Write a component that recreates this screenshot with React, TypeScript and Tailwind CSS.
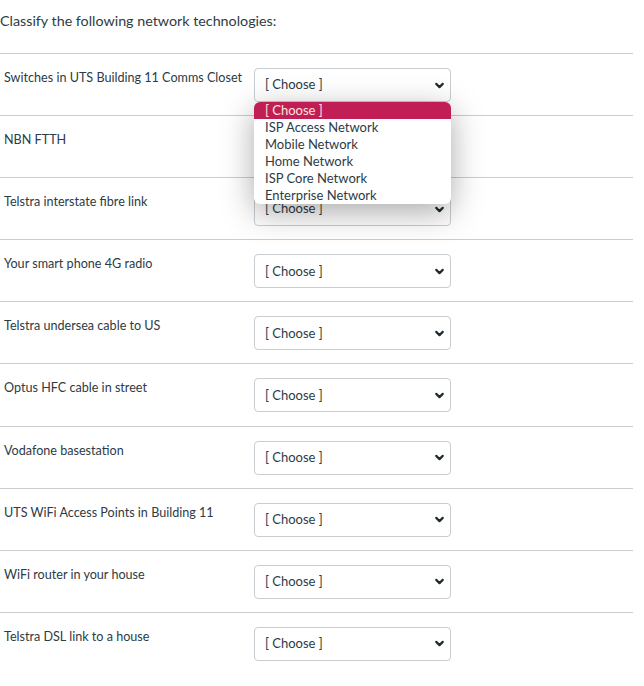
import { ChevronDown } from 'lucide-react';

const ITEMS = [
  'Switches in UTS Building 11 Comms Closet',
  'NBN FTTH',
  'Telstra interstate fibre link',
  'Your smart phone 4G radio',
  'Telstra undersea cable to US',
  'Optus HFC cable in street',
  'Vodafone basestation',
  'UTS WiFi Access Points in Building 11',
  'WiFi router in your house',
  'Telstra DSL link to a house',
];

const OPTIONS = [
  '[ Choose ]',
  'ISP Access Network',
  'Mobile Network',
  'Home Network',
  'ISP Core Network',
  'Enterprise Network',
];

function FakeSelect({ open }: { open?: boolean }) {
  return (
    <div className="relative w-[197px]">
      <div className="flex h-[34px] items-center justify-between rounded-[4px] border border-[#c7cdd1] bg-white pl-[10px] pr-[4px] text-[13px] text-[#2d3b45]">
        <span>[ Choose ]</span>
        <ChevronDown className="h-[13px] w-[13px] text-[#1f2a30]" strokeWidth={4} />
      </div>
      {open && (
        <ul className="absolute left-0 top-[34px] z-10 w-[197px] overflow-hidden rounded-[6px] bg-white text-[13px] leading-[17px] text-[#2d3b45] shadow-[0_8px_32px_rgba(0,0,0,0.34)]">
          {OPTIONS.map((o, i) => (
            <li
              key={o}
              className={
                i === 0
                  ? 'bg-[#c21e56] pl-[11px] text-[#fde4dc]'
                  : 'pl-[11px]'
              }
            >
              {o}
            </li>
          ))}
        </ul>
      )}
    </div>
  );
}

export default function App() {
  return (
    <div className="w-[644px] bg-white pr-[11px] font-['Lato','Noto_Sans',sans-serif] text-[#2d3b45]">
      <p className="h-[53px] pt-[10px] text-[14.3px]">Classify the following network technologies:</p>
      {ITEMS.map((label, i) => (
        <div key={label} className="flex h-[62.1px] border-t border-[#c7cdd1]">
          <div className="w-[254px] pl-[4px] pt-[15px] text-[12.6px]">{label}</div>
          <div className="pt-[14px]">
            <FakeSelect open={i === 0} />
          </div>
        </div>
      ))}
    </div>
  );
}
